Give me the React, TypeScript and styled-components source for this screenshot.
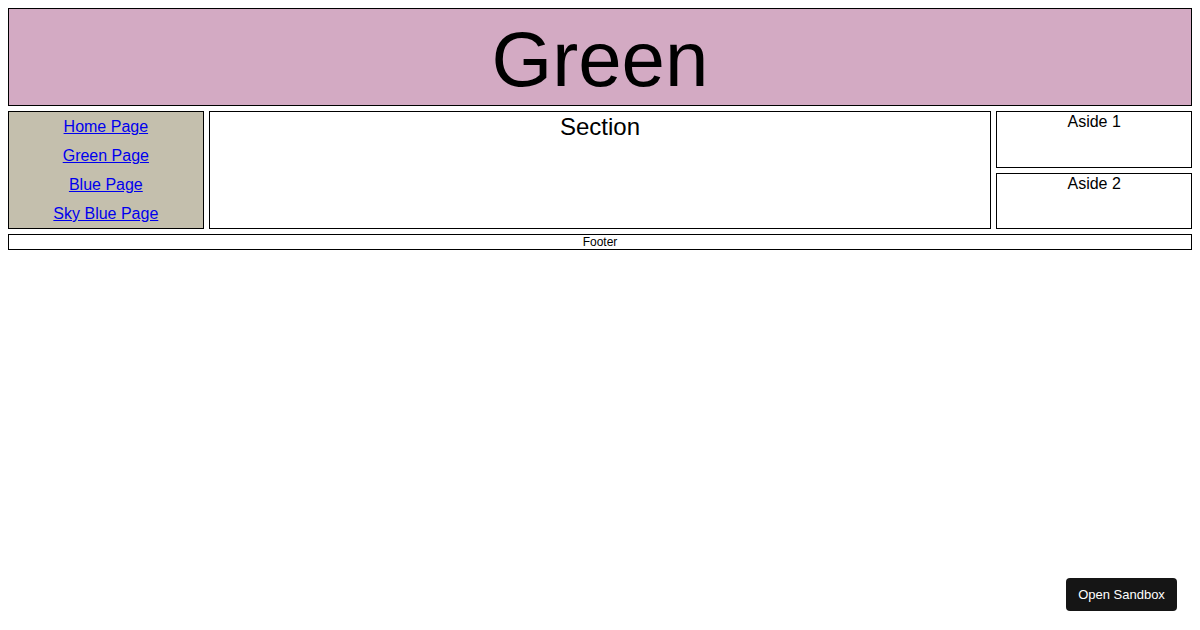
import React from "react";
import styled, { createGlobalStyle } from "styled-components";

const GlobalStyle = createGlobalStyle`
  body {
    margin: 8px;
    font-family: "Liberation Sans", Arial, sans-serif;
    background: #ffffff;
    color: #000000;
  }
`;

const Page = styled.div`
  display: flex;
  flex-direction: column;
  gap: 5px;
`;

const Header = styled.header`
  border: 1px solid #000;
  background: #d3aac3;
  height: 96px;
  display: flex;
  align-items: center;
  justify-content: center;
`;

const Title = styled.h1`
  margin: 0;
  padding-top: 4px;
  font-size: 78px;
  font-weight: 400;
  line-height: 92px;
`;

const Main = styled.div`
  display: grid;
  grid-template-columns: 1fr 4fr 1fr;
  gap: 5px;
`;

const Nav = styled.nav`
  border: 1px solid #000;
  background: #c4bfad;
  display: flex;
  flex-direction: column;
  align-items: center;
`;

const NavLink = styled.a`
  display: block;
  height: 29px;
  line-height: 29px;
  font-size: 16px;
  color: #0000ee;
  text-decoration: underline;
`;

const Section = styled.section`
  border: 1px solid #000;
  text-align: center;
  padding-top: 1px;
`;

const SectionTitle = styled.h2`
  margin: 0;
  font-size: 24px;
  font-weight: 400;
  line-height: 28px;
`;

const AsideCol = styled.div`
  display: flex;
  flex-direction: column;
  gap: 5px;
`;

const Aside = styled.aside<{ $h: number }>`
  border: 1px solid #000;
  box-sizing: border-box;
  height: ${(p) => p.$h}px;
  padding-top: 1px;
  text-align: center;
  font-size: 16px;
  line-height: 18px;
`;

const Footer = styled.footer`
  border: 1px solid #000;
  text-align: center;
  font-size: 12px;
  line-height: 14px;
`;

const SandboxButton = styled.button`
  position: fixed;
  right: 23px;
  bottom: 19px;
  width: 111px;
  height: 33px;
  border: none;
  border-radius: 4px;
  background: #151515;
  color: #ffffff;
  font-family: "Liberation Sans", Arial, sans-serif;
  font-size: 13px;
  cursor: pointer;
`;

export default function App() {
  return (
    <>
      <GlobalStyle />
      <Page>
        <Header>
          <Title>Green</Title>
        </Header>
        <Main>
          <Nav>
            <NavLink href="#">Home Page</NavLink>
            <NavLink href="#">Green Page</NavLink>
            <NavLink href="#">Blue Page</NavLink>
            <NavLink href="#">Sky Blue Page</NavLink>
          </Nav>
          <Section>
            <SectionTitle>Section</SectionTitle>
          </Section>
          <AsideCol>
            <Aside $h={57}>Aside 1</Aside>
            <Aside $h={56}>Aside 2</Aside>
          </AsideCol>
        </Main>
        <Footer>Footer</Footer>
      </Page>
      <SandboxButton>Open Sandbox</SandboxButton>
    </>
  );
}
